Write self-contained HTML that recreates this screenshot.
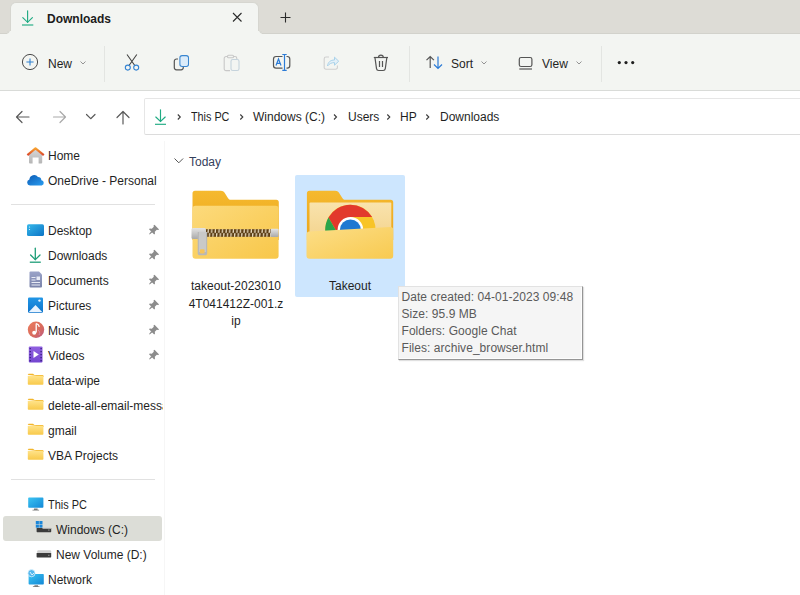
<!DOCTYPE html>
<html><head><meta charset="utf-8">
<style>
*{margin:0;padding:0;box-sizing:border-box}
html,body{width:800px;height:595px;overflow:hidden;background:#fff}
body{position:relative;font-family:"Liberation Sans",sans-serif;font-size:12px;color:#1f1f1f}
.a{position:absolute;white-space:nowrap;line-height:16px}
svg{position:absolute;overflow:visible}
#title{position:absolute;left:0;top:0;width:800px;height:34px;background:#dddcd6}
#tab{position:absolute;left:10px;top:1.5px;width:249px;height:33.5px;background:#f3f5f2;border-radius:6px 6px 0 0;border:1px solid #d6d6d0;border-bottom:none}
#toolbar{position:absolute;left:0;top:34px;width:800px;height:57px;background:#f3f5f2;border-bottom:1px solid #d9dbd8}
#addr{position:absolute;left:144px;top:98px;width:660px;height:37px;border:1px solid #e6e6e6;border-bottom-color:#dcdcdc;border-radius:2px;background:#fff}
.sep{position:absolute;width:1px;background:#e3e5e2}
.nsep{position:absolute;left:11px;width:144px;height:1px;background:#e1e1e1}
.pin{position:absolute}
</style></head><body>
<div id="title"></div>
<div style="position:absolute;left:0;top:33px;width:800px;height:1px;background:#d2d2cc"></div>

<div id="tab"></div>
<div style="position:absolute;left:7px;top:31px;width:4px;height:3px;background:radial-gradient(circle at 0 0,#d9d9d3 2.3px,#f3f5f2 3px)"></div>
<div style="position:absolute;left:258px;top:31px;width:4px;height:3px;background:radial-gradient(circle at 100% 0,#d9d9d3 2.3px,#f3f5f2 3px)"></div>
<!-- tab icon -->
<svg style="left:0;top:0" width="800" height="40">
  <g stroke="#1fab83" stroke-width="1.15" fill="none" stroke-linecap="round">
    <path d="M27.6 10.8 V22.3"/><path d="M22.8 17.6 L27.6 22.3 L32.4 17.6"/>
  </g>
  <path d="M22 25 H33.3" stroke="#1fab83" stroke-width="1.15"/>
  <g stroke="#2b2b2b" stroke-width="1.1" fill="none">
    <path d="M233 13 L241.5 21.5 M241.5 13 L233 21.5"/>
    <path d="M285.5 12.5 V22.5 M280.5 17.5 H290.5"/>
  </g>
</svg>
<div class="a" style="left:47px;top:10.7px;font-weight:700;color:#1c1c1c">Downloads</div>

<div id="toolbar"></div>
<div class="sep" style="left:103.5px;top:46px;height:36px"></div>
<div class="sep" style="left:408.5px;top:46px;height:36px"></div>
<div class="sep" style="left:600.5px;top:46px;height:36px"></div>

<div class="a" style="left:48px;top:55.5px">New</div>
<div class="a" style="left:451px;top:55.5px">Sort</div>
<div class="a" style="left:542px;top:55.5px">View</div>

<svg style="left:0;top:0" width="800" height="90">
  <!-- New -->
  <circle cx="30" cy="62" r="7.6" fill="none" stroke="#4a4a4a" stroke-width="1"/>
  <path d="M30 58.4 V65.6 M26.4 62 H33.6" stroke="#2f80d0" stroke-width="1.1"/>
  <path d="M80.5 61.5 L83 64 L85.5 61.5" stroke="#888" stroke-width="0.9" fill="none"/>
  <!-- cut -->
  <g fill="none" stroke-width="1.1">
    <path d="M127 54.5 L134.6 65.3 M136.8 54.5 L129.2 65.3" stroke="#444"/>
    <circle cx="127.8" cy="67.6" r="2.5" stroke="#3383d2" stroke-width="1.1"/>
    <circle cx="136.2" cy="67.6" r="2.5" stroke="#3383d2" stroke-width="1.1"/>
  </g>
  <!-- copy -->
  <path d="M178 59 h-1.5 a2.2 2.2 0 0 0 -2.2 2.2 v6.4 a2.2 2.2 0 0 0 2.2 2.2 h4.6 a2.2 2.2 0 0 0 2.2 -2.2 v-1" fill="none" stroke="#555" stroke-width="1.2"/>
  <rect x="179.9" y="55.6" width="8.6" height="10.8" rx="2.2" fill="#dcecfa" stroke="#3a86d0" stroke-width="1.05"/>
  <!-- paste disabled -->
  <g fill="none" stroke="#c8c8c8" stroke-width="1.1">
    <path d="M228 56.5 h-2 a1.8 1.8 0 0 0 -1.8 1.8 v10.5 a1.8 1.8 0 0 0 1.8 1.8 h4"/>
    <rect x="227.5" y="55.2" width="6" height="2.6" rx="1"/>
    <path d="M233 56.5 h2 a1.8 1.8 0 0 1 1.8 1.8 v1"/>
    <rect x="231" y="59.5" width="8" height="11" rx="1.8" stroke="#c5d3dc"/>
  </g>
  <!-- rename -->
  <rect x="273.5" y="56.5" width="16.3" height="11.6" rx="2.6" fill="none" stroke="#555" stroke-width="1.2"/>
  <rect x="282.5" y="53" width="4" height="18.5" fill="#f3f5f2"/>
  <path d="M276 65.5 L278.5 59 L281 65.5 M276.9 63.3 H280.1" stroke="#2b7bd6" stroke-width="1.2" fill="none"/>
  <path d="M284.5 54.5 V70.3 M282.3 54.5 H286.7 M282.3 70.3 H286.7" stroke="#2b7bd6" stroke-width="1.2" fill="none"/>
  <!-- share disabled -->
  <path d="M329 57 h-3 a1.8 1.8 0 0 0 -1.8 1.8 v8.6 a1.8 1.8 0 0 0 1.8 1.8 h9.6 a1.8 1.8 0 0 0 1.8 -1.8 v-2" fill="none" stroke="#cfcfcf" stroke-width="1.1"/>
  <path d="M327.5 66 c0.5 -4 3 -6 7 -6 v-2.8 l4.2 4 l-4.2 4 v-2.6 c-3 0 -5 1 -7 3.4z" fill="#e3f0f8" stroke="#a9d2ea" stroke-width="1"/>
  <!-- delete -->
  <g fill="none" stroke="#555" stroke-width="1.2">
    <path d="M373.8 57.5 H388"/>
    <path d="M378.5 57.5 a2.4 2.4 0 0 1 4.8 0"/>
    <path d="M375 57.8 L376.5 68.6 a2.2 2.2 0 0 0 2.2 1.9 h4.4 a2.2 2.2 0 0 0 2.2 -1.9 L386.8 57.8"/>
    <path d="M379.5 61 V67 M382.5 61 V67"/>
  </g>
  <!-- sort -->
  <g fill="none" stroke-width="1.2">
    <path d="M430.2 56.5 V68 M426.5 60.2 L430.2 56.5 L433.9 60.2" stroke="#555"/>
    <path d="M438 56.5 V68.5 M434 64.5 L438 68.5 L442 64.5" stroke="#2b7bd6"/>
  </g>
  <path d="M481.5 61.5 L484 64 L486.5 61.5" stroke="#888" stroke-width="0.9" fill="none"/>
  <!-- view -->
  <rect x="519.3" y="57.5" width="12.6" height="9" rx="1.8" fill="none" stroke="#555" stroke-width="1.2"/>
  <path d="M519.3 69 H532" stroke="#555" stroke-width="1.2"/>
  <path d="M576.5 61.5 L579 64 L581.5 61.5" stroke="#888" stroke-width="0.9" fill="none"/>
  <!-- more -->
  <circle cx="619.3" cy="62.6" r="1.6" fill="#1f1f1f"/><circle cx="626" cy="62.6" r="1.6" fill="#1f1f1f"/><circle cx="632.7" cy="62.6" r="1.6" fill="#1f1f1f"/>
</svg>

<!-- address row -->
<div id="addr"></div>
<svg style="left:0;top:0" width="800" height="140">
  <g fill="none" stroke-width="1.2" stroke-linecap="round" stroke-linejoin="round">
    <path d="M16.5 117 H29 M22 111.5 L16.5 117 L22 122.5" stroke="#5a5a5a"/>
    <path d="M53.5 117 H65.5 M60 111.5 L65.5 117 L60 122.5" stroke="#a9a9a9"/>
    <path d="M86.5 114.5 L90.7 118.7 L95 114.5" stroke="#5a5a5a"/>
    <path d="M123 111.5 V124 M117 117.5 L123 111.5 L129 117.5" stroke="#5a5a5a"/>
  </g>
  <g stroke="#1fab83" stroke-width="1.15" fill="none" stroke-linecap="round">
    <path d="M160.5 109.8 V121.5"/><path d="M155.8 117 L160.5 121.5 L165.2 117"/>
  </g>
  <path d="M155 124.3 H166" stroke="#1fab83" stroke-width="1.15"/>
  <g fill="none" stroke="#3a3a3a" stroke-width="1.1">
    <path d="M177.8 114.5 L180.3 117 L177.8 119.5"/>
    <path d="M240.3 114.5 L242.8 117 L240.3 119.5"/>
    <path d="M334 114.5 L336.5 117 L334 119.5"/>
    <path d="M387.3 114.5 L389.8 117 L387.3 119.5"/>
    <path d="M426.3 114.5 L428.8 117 L426.3 119.5"/>
  </g>
</svg>
<div class="a" style="left:191px;top:109.2px;transform:scaleX(0.9);transform-origin:0 0">This PC</div>
<div class="a" style="left:253px;top:109.2px">Windows (C:)</div>
<div class="a" style="left:348px;top:109.2px">Users</div>
<div class="a" style="left:400px;top:109.2px">HP</div>
<div class="a" style="left:440px;top:109.2px">Downloads</div>

<!-- nav pane -->
<div style="position:absolute;left:164px;top:141px;width:1px;height:454px;background:#f6f6f6"></div>
<div class="nsep" style="top:204px"></div>
<div class="nsep" style="top:479px"></div>
<div style="position:absolute;left:3px;top:516px;width:159px;height:25px;background:#dcddd7;border-radius:3px"></div>

<div class="a" style="left:48px;top:148px">Home</div>
<div class="a" style="left:48px;top:173px">OneDrive - Personal</div>
<div class="a" style="left:48px;top:223px">Desktop</div>
<div class="a" style="left:48px;top:248px">Downloads</div>
<div class="a" style="left:48px;top:273px">Documents</div>
<div class="a" style="left:48px;top:298px">Pictures</div>
<div class="a" style="left:48px;top:323px">Music</div>
<div class="a" style="left:48px;top:348px">Videos</div>
<div class="a" style="left:48px;top:373px">data-wipe</div>
<div class="a" style="left:48px;top:398px;width:115px;overflow:hidden">delete-all-email-messages</div>
<div class="a" style="left:48px;top:423px">gmail</div>
<div class="a" style="left:48px;top:448px">VBA Projects</div>
<div class="a" style="left:48px;top:497px;transform:scaleX(0.91);transform-origin:0 0">This PC</div>
<div class="a" style="left:56px;top:522px">Windows (C:)</div>
<div class="a" style="left:56px;top:547px">New Volume (D:)</div>
<div class="a" style="left:48px;top:572px">Network</div>


<!-- nav icons -->
<svg style="left:0;top:0" width="170" height="595">
  <defs>
    <linearGradient id="roof" x1="0" y1="0" x2="0" y2="1"><stop offset="0" stop-color="#f7a130"/><stop offset="1" stop-color="#d9452a"/></linearGradient>
    <linearGradient id="wall" x1="0" y1="0" x2="0" y2="1"><stop offset="0" stop-color="#d6d6d6"/><stop offset="1" stop-color="#b5b5b5"/></linearGradient>
    <linearGradient id="cloud" x1="0" y1="0" x2="1" y2="1"><stop offset="0" stop-color="#0b5bb5"/><stop offset="1" stop-color="#2a9df0"/></linearGradient>
    <linearGradient id="desk" x1="0" y1="0" x2="1" y2="1"><stop offset="0" stop-color="#36b8ea"/><stop offset="1" stop-color="#0c74c6"/></linearGradient>
    <linearGradient id="doc" x1="0" y1="0" x2="0" y2="1"><stop offset="0" stop-color="#9aa3c8"/><stop offset="1" stop-color="#7a83aa"/></linearGradient>
    <linearGradient id="pic" x1="0" y1="0" x2="0" y2="1"><stop offset="0" stop-color="#2196e6"/><stop offset="1" stop-color="#0f75cc"/></linearGradient>
    <linearGradient id="mus" x1="0" y1="0" x2="1" y2="1"><stop offset="0" stop-color="#ec7d5e"/><stop offset="0.6" stop-color="#d86a5c"/><stop offset="1" stop-color="#b85a8a"/></linearGradient>
    <linearGradient id="vid" x1="0" y1="0" x2="0" y2="1"><stop offset="0" stop-color="#9060e0"/><stop offset="1" stop-color="#7445d0"/></linearGradient>
    <linearGradient id="sf" x1="0" y1="0" x2="0" y2="1"><stop offset="0" stop-color="#ffe38a"/><stop offset="1" stop-color="#f8c94a"/></linearGradient>
    <linearGradient id="mon" x1="0" y1="0" x2="1" y2="1"><stop offset="0" stop-color="#3cc4f2"/><stop offset="1" stop-color="#1287d6"/></linearGradient>
  </defs>
  <!-- home -->
  <path d="M29 155 V162.5 a1 1 0 0 0 1 1 h2.6 V157.5 h6 V163.5 h2.6 a1 1 0 0 0 1 -1 V155 L35.5 149.5z" fill="url(#wall)"/>
  <path d="M27.4 155.2 L35.5 148.4 L43.8 155.2" fill="none" stroke="url(#roof)" stroke-width="2.2" stroke-linejoin="round"/>
  <!-- cloud -->
  <path d="M30 185.5 a3 3 0 0 1 -0.6 -5.9 a4.8 4.8 0 0 1 8.6 -2.6 a3.6 3.6 0 0 1 3.4 3.2 a2.7 2.7 0 0 1 0.3 5.3z" fill="url(#cloud)"/>
  <!-- desktop -->
  <rect x="27" y="224.2" width="17" height="11.8" rx="1.6" fill="url(#desk)"/>
  <circle cx="29.5" cy="227" r="0.6" fill="#dff4ff"/><circle cx="29.5" cy="229.5" r="0.6" fill="#dff4ff"/>
  <!-- downloads -->
  <g stroke="#1e9e78" stroke-width="1.3" fill="none" stroke-linecap="round">
    <path d="M35.3 248.2 V259.5"/><path d="M30.6 255 L35.3 259.6 L40 255"/>
  </g>
  <path d="M29.8 262.2 H40.8" stroke="#1e9e78" stroke-width="1.3"/>
  <!-- documents -->
  <path d="M29.5 272.5 a1 1 0 0 1 1 -1 h8.5 l3 3 v12.1 a1 1 0 0 1 -1 1 h-10.5 a1 1 0 0 1 -1 -1z" fill="url(#doc)"/>
  <g fill="#e8ebf5"><rect x="31.5" y="277" width="4" height="1"/><rect x="31.5" y="279.5" width="4" height="1"/><rect x="31.5" y="282" width="8.5" height="1"/><rect x="31.5" y="284.5" width="8.5" height="1"/><rect x="36.5" y="276.5" width="3.5" height="3.5"/></g>
  <!-- pictures -->
  <rect x="28" y="297.4" width="15" height="15.3" rx="1.2" fill="url(#pic)"/>
  <path d="M28.8 312 L35.5 305 L42.2 312z" fill="#e9f4ff"/>
  <circle cx="39.5" cy="300.6" r="1.2" fill="#e9f4ff"/>
  <!-- music -->
  <circle cx="36" cy="329.7" r="8.2" fill="url(#mus)"/>
  <path d="M36.2 323.5 V332.5" stroke="#fff" stroke-width="1.3"/>
  <circle cx="34.2" cy="332.8" r="2" fill="#fff"/>
  <path d="M36.2 323.5 c1.5 0.5 3 1.5 3 3.5" stroke="#fff" stroke-width="1.1" fill="none"/>
  <path d="M38 330 c1.5 1 2.5 3 1 5" stroke="#d98aa0" stroke-width="1" fill="none"/>
  <!-- videos -->
  <rect x="28.8" y="346.5" width="13.7" height="16.1" rx="1" fill="url(#vid)"/>
  <g fill="#2e1a70"><rect x="29.6" y="348" width="1.2" height="1.2"/><rect x="29.6" y="351" width="1.2" height="1.2"/><rect x="29.6" y="354" width="1.2" height="1.2"/><rect x="29.6" y="357" width="1.2" height="1.2"/><rect x="29.6" y="360" width="1.2" height="1.2"/>
  <rect x="40.5" y="348" width="1.2" height="1.2"/><rect x="40.5" y="351" width="1.2" height="1.2"/><rect x="40.5" y="354" width="1.2" height="1.2"/><rect x="40.5" y="357" width="1.2" height="1.2"/><rect x="40.5" y="360" width="1.2" height="1.2"/></g>
  <path d="M33.5 351 L38.8 354.5 L33.5 358z" fill="#fff"/>
  <!-- small folders -->
  <g id="sfold">
    <path d="M27.8 374.8 a1 1 0 0 1 1 -1 h4.2 l1.5 1.3 h8 a1 1 0 0 1 1 1 v1z" fill="#f2b52a"/>
    <rect x="27.8" y="375.8" width="15.6" height="9" rx="0.8" fill="url(#sf)"/>
  </g>
  <use href="#sfold" y="25"/><use href="#sfold" y="50"/><use href="#sfold" y="75"/>
  <!-- this pc -->
  <rect x="28.2" y="497.6" width="15.2" height="10.2" rx="0.8" fill="url(#mon)"/>
  <path d="M34 508.5 h3.6 v1.2 h1.5 v0.9 h-6.6 v-0.9 h1.5z" fill="#7a7a7a"/>
  <!-- windows c -->
  <g fill="#1a86d9"><rect x="35.8" y="521" width="3.1" height="3.1"/><rect x="39.4" y="521" width="3.1" height="3.1"/><rect x="35.8" y="524.6" width="3.1" height="3.1"/><rect x="39.4" y="524.6" width="3.1" height="3.1"/></g>
  <rect x="36.6" y="528" width="14.6" height="4.2" rx="0.6" fill="#3b3b3b"/>
  <path d="M42.5 527.5 h7.5 a1.2 1.2 0 0 1 1.2 1.2 h-8.7z" fill="#cfcfcf"/>
  <rect x="48" y="529.6" width="1.6" height="0.9" fill="#9a9a9a"/>
  <!-- new volume -->
  <path d="M37.2 551.5 a1.2 1.2 0 0 1 1.2 -1.2 h11.6 a1.2 1.2 0 0 1 1.2 1.2 v1.5 h-14z" fill="#d0d0d0"/>
  <rect x="36.6" y="553" width="14.6" height="4.4" rx="0.6" fill="#3b3b3b"/>
  <rect x="48" y="554.8" width="1.6" height="0.9" fill="#9a9a9a"/>
  <!-- network -->
  <rect x="28.6" y="574" width="15.2" height="10.6" rx="0.8" fill="url(#mon)"/>
  <path d="M34.4 585.2 h3.6 v1 h1.5 v0.8 h-6.6 v-0.8 h1.5z" fill="#7a7a7a"/>
  <circle cx="31.5" cy="573.2" r="3.6" fill="#56b7ec" stroke="#e8f6ff" stroke-width="0.7"/>
  <path d="M30 572 l2 3 l2 -2" fill="none" stroke="#fff" stroke-width="0.8"/>
  <!-- pins -->
  <g id="pin" fill="#8c8c8c">
    <path d="M154.5 224.8 l4.6 4.6 l-1 0.6 l-1.3 -0.3 l-2 2 l0.2 2 l-0.8 0.8 l-5.2 -5.2 l0.8 -0.8 l2 0.2 l2 -2 l-0.3 -1.3z"/>
    <path d="M151.3 231 l-2.2 2.9 l0.5 0.5 l2.9 -2.2z"/>
  </g>
  <use href="#pin" y="25"/><use href="#pin" y="50"/><use href="#pin" y="75"/><use href="#pin" y="100"/><use href="#pin" y="125"/>
</svg>

<!-- content -->
<svg style="left:0;top:0" width="800" height="200">
  <path d="M174.5 158.5 L178.8 162.8 L183.1 158.5" fill="none" stroke="#555" stroke-width="1"/>
</svg>
<div class="a" style="left:189px;top:153.6px;color:#34405c">Today</div>

<div style="position:absolute;left:295px;top:175px;width:110px;height:122px;background:#cde6fe;border-radius:2px"></div>
<div class="a" style="left:236px;top:278px;transform:translateX(-50%);text-align:center">takeout-2023010</div>
<div class="a" style="left:236px;top:295.5px;transform:translateX(-50%);text-align:center">4T041412Z-001.z</div>
<div class="a" style="left:236px;top:313px;transform:translateX(-50%);text-align:center">ip</div>
<div class="a" style="left:350px;top:278px;transform:translateX(-50%);text-align:center">Takeout</div>


<!-- big folders -->
<svg style="left:0;top:0" width="800" height="300">
  <defs>
    <linearGradient id="fback" x1="0" y1="0" x2="0" y2="1"><stop offset="0" stop-color="#f5b92e"/><stop offset="1" stop-color="#eba51c"/></linearGradient>
    <linearGradient id="ffront" x1="0" y1="0" x2="1" y2="1"><stop offset="0" stop-color="#fcda7c"/><stop offset="1" stop-color="#f8c749"/></linearGradient>
    <linearGradient id="ffront2" x1="0" y1="0" x2="1" y2="1"><stop offset="0" stop-color="#fcde88"/><stop offset="1" stop-color="#f8ca50"/></linearGradient>
    <linearGradient id="paper" x1="0" y1="0" x2="0" y2="1"><stop offset="0" stop-color="#f9e3ad"/><stop offset="1" stop-color="#f3d28a"/></linearGradient>
    <linearGradient id="metal" x1="0" y1="0" x2="0" y2="1"><stop offset="0" stop-color="#e4e4e4"/><stop offset="1" stop-color="#a9a9a9"/></linearGradient>
    <pattern id="teeth" x="0" y="229" width="3.6" height="8" patternUnits="userSpaceOnUse">
      <rect width="3.6" height="8" fill="#e9dcc2"/>
      <path d="M0 0 H2.6 L2.0 4.3 H0z" fill="#5e4018"/>
      <path d="M1.6 3.7 H3.6 V8 H1.0z" fill="#5e4018"/>
    </pattern>
    <clipPath id="chromeclip"><path d="M300 190 H400 V227 L306 231.5z"/></clipPath>
  </defs>
  <!-- zip folder -->
  <path d="M192.5 215 V193.3 a2.5 2.5 0 0 1 2.5 -2.5 H220.6 C223.1 190.8 224.1 191.8 225.4 194 L227.6 197.5 C228.6 199.2 229.1 199.8 231.1 199.8 H276.3 a2.5 2.5 0 0 1 2.5 2.5 V240 H192.5z" fill="url(#fback)"/>
  <rect x="192.5" y="205.7" width="86.1" height="53" rx="3" fill="url(#ffront)"/>
  <rect x="200" y="229.2" width="71" height="7.6" fill="url(#teeth)"/>
  <rect x="191.5" y="228" width="14.5" height="11" rx="1.5" fill="url(#metal)"/>
  <rect x="270.5" y="228.8" width="8.1" height="8.2" rx="1" fill="url(#metal)"/>
  <path d="M197.7 232 h9.5 v21.5 a1.8 1.8 0 0 1 -1.8 1.8 h-5.9 a1.8 1.8 0 0 1 -1.8 -1.8z" fill="#b8b8b8"/><path d="M199 232 h7 v20 h-7z" fill="#c9c9c9"/>
  <rect x="199.8" y="249.2" width="4.8" height="4.2" rx="1.2" fill="#f5c45a"/>
  <!-- chrome folder -->
  <path d="M306.9 215 V193.3 a2.5 2.5 0 0 1 2.5 -2.5 H335.0 C337.5 190.8 338.5 191.8 339.8 194 L342.0 197.5 C343.0 199.2 343.5 199.8 345.5 199.8 H390.7 a2.5 2.5 0 0 1 2.5 2.5 V240 H306.9z" fill="url(#fback)"/>
  <rect x="309.5" y="202.5" width="81.8" height="40" rx="1" fill="url(#paper)"/>
  <g>
    <circle cx="350.4" cy="229.9" r="25.2" fill="#f8c426"/>
    <path d="M350.4 217.1 L372.11 217.1 A25.2 25.2 0 0 0 328.46 217.50 L339.32 236.30 Z" fill="#e2392c"/>
    <path d="M339.32 236.30 L328.46 217.50 A25.2 25.2 0 0 0 350.4 255.1 L350.4 229.9 Z" fill="#2aa54c"/>
    <circle cx="350.4" cy="229.9" r="12.8" fill="#fff"/>
    <circle cx="350.4" cy="229.9" r="10.5" fill="#1f78d1"/>
  </g>
  <path d="M306.5 234.5 a3 3 0 0 1 2.7 -3 L390.5 227 a2.7 2.7 0 0 1 2.7 2.7 V255.7 a3 3 0 0 1 -3 3 H309.5 a3 3 0 0 1 -3 -3z" fill="url(#ffront2)"/>
</svg>

<!-- tooltip -->
<div style="position:absolute;left:398px;top:286px;width:185px;height:74px;background:#f5f5f5;border:1px solid #e2e2e2;border-right-color:#959595;border-bottom-color:#959595;box-shadow:inset -1px -1px 0 #fdfdfd,1px 1px 1px rgba(0,0,0,0.12)"></div>
<div class="a" style="left:401.5px;top:289px;color:#5a5a5a;line-height:17px;letter-spacing:0.05px">Date created: 04-01-2023 09:48<br>Size: 95.9 MB<br>Folders: Google Chat<br>Files: archive_browser.html</div>

</body></html>
